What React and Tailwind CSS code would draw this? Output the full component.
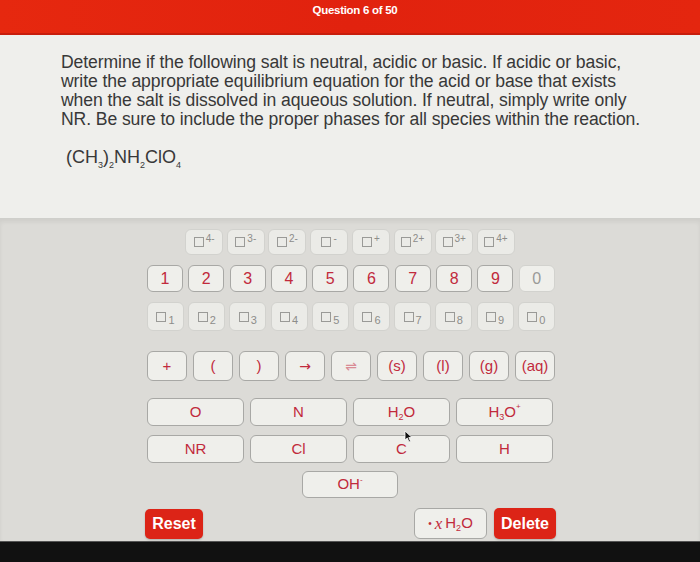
import React from 'react';

const FONT = { fontFamily: '"Liberation Sans", Arial, sans-serif' };
const DEJAVU = { fontFamily: '"DejaVu Sans", sans-serif' };

function Box({ className = '' }) {
  return <span className={`inline-block h-[10px] w-[10px] border-[1.5px] border-[#9a9a97] ${className}`} />;
}

function ChargeKey({ label }) {
  return (
    <div className="flex h-[26px] w-[38px] items-center justify-center rounded-[6px] border border-[#d2d2ce] bg-[#ebebe7]">
      <Box />
      <span className="ml-[2px] -mt-[6px] text-[10px] leading-none text-[#8d8d8a]">{label}</span>
    </div>
  );
}

function SubKey({ label }) {
  return (
    <div className="flex h-[29px] w-[37px] items-center justify-center rounded-[6px] border border-[#d2d2ce] bg-[#ebebe7]">
      <Box />
      <span className="ml-[2px] mt-[8px] text-[11px] leading-none text-[#8d8d8a]">{label}</span>
    </div>
  );
}

function NumKey({ label, disabled }) {
  return (
    <div
      className={`flex h-[27px] w-[36px] items-center justify-center rounded-[6px] border bg-[#efefeb] text-[16px] ${
        disabled ? 'border-[#d2d2ce] text-[#9a9a98]' : 'border-[#a8a8a5] text-[#c12a3c]'
      }`}
    >
      {label}
    </div>
  );
}

function SymKey({ children, faded }) {
  return (
    <div
      className={`flex h-[30px] w-[40px] items-center justify-center rounded-[6px] border border-[#a8a8a5] bg-[#efefeb] text-[15px] ${
        faded ? 'text-[#d98b95]' : 'text-[#c12a3c]'
      }`}
    >
      {children}
    </div>
  );
}

function ElemKey({ children }) {
  return (
    <div className="flex h-[28px] w-[97px] items-center justify-center rounded-[6px] border border-[#a8a8a5] bg-[#efefeb] text-[15px] text-[#c12a3c]">
      {children}
    </div>
  );
}

function Sub({ children }) {
  return <span className="relative top-[5px] text-[9px] leading-none">{children}</span>;
}

export default function App() {
  const charges = ['4-', '3-', '2-', '-', '+', '2+', '3+', '4+'];
  const nums = ['1', '2', '3', '4', '5', '6', '7', '8', '9', '0'];

  return (
    <div className="flex h-[562px] w-[700px] flex-col overflow-hidden" style={FONT}>
      <div className="flex h-[35px] justify-center border-b-2 border-[#c81d0c] bg-gradient-to-r from-[#e6280f] via-[#e1220e] to-[#e4260f] pl-[10px] pt-[2px]">
        <span className="text-[11.5px] font-bold tracking-tight text-white">Question 6 of 50</span>
      </div>

      <div className="h-[183px] bg-[#efefec] pl-[61px] pt-[18px] text-[#383838]">
        <p className="w-[620px] whitespace-nowrap text-[17.6px] leading-[19px] tracking-[-0.1px]">
          Determine if the following salt is neutral, acidic or basic. If acidic or basic,
          <br />
          write the appropriate equilibrium equation for the acid or base that exists
          <br />
          when the salt is dissolved in aqueous solution. If neutral, simply write only
          <br />
          NR. Be sure to include the proper phases for all species within the reaction.
        </p>
        <p className="ml-[5px] mt-[15px] text-[18px]">
          (CH<Sub>3</Sub>)<Sub>2</Sub>NH<Sub>2</Sub>ClO<Sub>4</Sub>
        </p>
      </div>

      <div className="relative flex h-[323px] flex-col border-t border-[#cfcfcb] bg-[#dcdbd7] shadow-[inset_0_3px_4px_rgba(0,0,0,0.06)]">
        <div className="mt-[10px] flex justify-center gap-[3.7px]">
          {charges.map((c) => (
            <ChargeKey key={c} label={c} />
          ))}
        </div>

        <div className="ml-[147px] mt-[10px] flex w-[410px] gap-[5.3px]">
          {nums.map((n) => (
            <NumKey key={n} label={n} disabled={n === '0'} />
          ))}
        </div>

        <div className="ml-[147px] mt-[10px] flex w-[410px] gap-[4.2px]">
          {nums.map((n) => (
            <SubKey key={n} label={n} />
          ))}
        </div>

        <div className="ml-[147px] mt-[20px] flex w-[410px] gap-[6px]">
          <SymKey>+</SymKey>
          <SymKey>(</SymKey>
          <SymKey>)</SymKey>
          <SymKey>
            <span className="text-[14px]" style={DEJAVU}>→</span>
          </SymKey>
          <SymKey faded>
            <span className="text-[14px]" style={DEJAVU}>⇌</span>
          </SymKey>
          <SymKey>(s)</SymKey>
          <SymKey>(l)</SymKey>
          <SymKey>(g)</SymKey>
          <SymKey>(aq)</SymKey>
        </div>

        <div className="ml-[147px] mt-[17px] grid w-[406px] grid-cols-4 gap-x-[6px] gap-y-[9px]">
          <ElemKey>O</ElemKey>
          <ElemKey>N</ElemKey>
          <ElemKey>
            H<Sub>2</Sub>O
          </ElemKey>
          <ElemKey>
            H<Sub>3</Sub>O<span className="relative -top-[5px] text-[8px] leading-none">+</span>
          </ElemKey>
          <ElemKey>NR</ElemKey>
          <ElemKey>Cl</ElemKey>
          <ElemKey>C</ElemKey>
          <ElemKey>H</ElemKey>
        </div>

        <div className="mt-[8px] flex justify-center">
          <div className="flex h-[27px] w-[96px] items-center justify-center rounded-[6px] border border-[#a8a8a5] bg-[#efefeb] text-[15px] text-[#c12a3c]">
            OH<span className="relative -top-[5px] text-[8px] leading-none">-</span>
          </div>
        </div>

        <div className="ml-[145px] mt-[10px] flex w-[411px] items-center">
          <div className="flex h-[30px] w-[58px] items-center justify-center rounded-[5px] bg-[#dc2417] text-[16px] font-bold text-white shadow-[0_1px_2px_rgba(0,0,0,0.2)]">
            Reset
          </div>
          <div className="ml-auto flex h-[31px] w-[73px] items-center justify-center rounded-[6px] border border-[#a8a8a5] bg-[#efefeb] text-[15px] text-[#c12a3c]">
            <span className="mr-[3px] text-[10px]">•</span>
            <span className="mr-[3px] text-[17px] italic" style={{ fontFamily: '"Liberation Serif", serif' }}>
              x
            </span>
            H<Sub>2</Sub>O
          </div>
          <div className="ml-[7px] flex h-[31px] w-[62px] items-center justify-center rounded-[5px] bg-[#dc2417] text-[16px] font-bold text-white shadow-[0_1px_2px_rgba(0,0,0,0.2)]">
            Delete
          </div>
        </div>

        <svg className="absolute left-[404px] top-[211px]" width="9" height="13" viewBox="0 0 9 13">
          <path d="M1 1 L1 10 L3.3 8 L5 12 L6.5 11.3 L4.8 7.5 L8 7.5 Z" fill="#111" stroke="#fff" strokeWidth="0.8" />
        </svg>
      </div>

      <div className="flex-1 border-t border-[#555] bg-[#111]" />
    </div>
  );
}
